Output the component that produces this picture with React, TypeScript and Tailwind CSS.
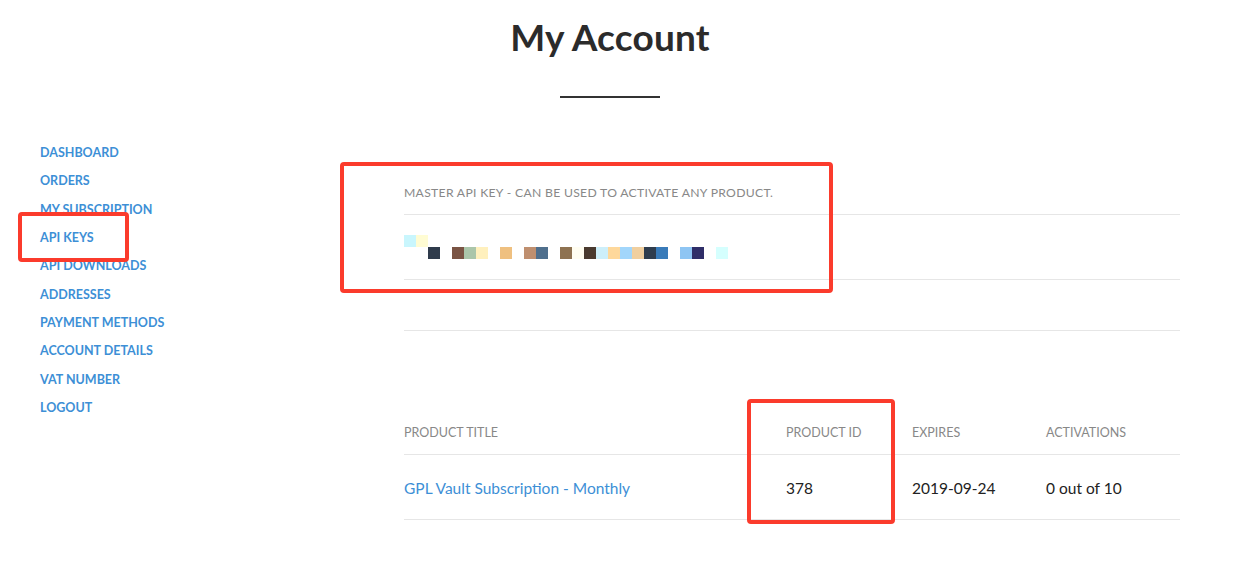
import React from "react";

const NAV = [
  "Dashboard",
  "Orders",
  "My Subscription",
  "API Keys",
  "API Downloads",
  "Addresses",
  "Payment Methods",
  "Account Details",
  "VAT Number",
  "Logout",
];

// pixelated (censored) key: [column index, row, colour]
const KEY_PIXELS: [number, number, string][] = [
  [0, 0, "#c9f6fd"], [1, 0, "#fffcd3"],
  [2, 1, "#2f3b4b"], [4, 1, "#7a5444"], [5, 1, "#abc6aa"], [6, 1, "#fff0bd"],
  [8, 1, "#efc080"], [10, 1, "#bf8f6f"], [11, 1, "#4f6f8d"], [13, 1, "#8e7251"],
  [14, 1, "#fffdf1"], [15, 1, "#4a3a2f"], [16, 1, "#cdeffa"], [17, 1, "#fed89b"],
  [18, 1, "#a2d6fb"], [19, 1, "#f0cf9f"], [20, 1, "#2f3d4e"], [21, 1, "#397bb9"],
  [23, 1, "#8ec5f3"], [24, 1, "#2f2e68"], [26, 1, "#d5fffe"],
];

const COLS = ["Product Title", "Product ID", "Expires", "Activations"];

function RedBox({ className }: { className: string }) {
  return <div className={`absolute border-[4.5px] border-[#fb3b2c] rounded-[4px] pointer-events-none ${className}`} />;
}

export default function App() {
  return (
    <div className="relative w-full min-h-[568px] bg-white text-[#222] font-['Lato','Open_Sans',sans-serif]">
      <div className="ml-[40px] w-[1140px]">
        {/* Page title */}
        <div className="pt-[15px] flex flex-col items-center">
          <h1 className="text-[37px] leading-[44px] font-bold text-[#2b2b2b] tracking-[0.2px]">My Account</h1>
          <div className="mt-[37px] w-[100px] h-[2px] bg-[#333]" />
        </div>

        <div className="flex mt-[41px]">
          {/* Account navigation */}
          <nav className="w-[364px] shrink-0">
            <ul>
              {NAV.map(n => (
                <li key={n} className="text-[12.5px] leading-[28.33px] font-bold uppercase text-[#3d8fd6]">
                  {n}
                </li>
              ))}
            </ul>
          </nav>

          {/* API keys content */}
          <div className="w-[776px] pt-[32px]">
            <div className="h-[44px] pt-[2px] flex items-center border-b border-[#e6e6e6] text-[12.2px] uppercase text-[#888] tracking-[0.3px]">
              Master API key - can be used to activate any product.
            </div>
            <div className="h-[65px] flex items-center border-b border-[#e6e6e6]">
              <svg width="336" height="24" viewBox="0 0 336 24" className="block">
                {KEY_PIXELS.map(([c, r, fill]) => (
                  <rect key={`${c}-${r}`} x={c * 12} y={r * 12} width="12" height="12" fill={fill} />
                ))}
              </svg>
            </div>
            <div className="h-[51px] border-b border-[#e6e6e6]" />

            <div className="mt-[79px]">
              <div className="grid grid-cols-[382px_126px_134px_134px] h-[45px] pt-[2px] items-center border-b border-[#e6e6e6]">
                {COLS.map(c => (
                  <div key={c} className="text-[12.5px] uppercase text-[#888]">{c}</div>
                ))}
              </div>
              <div className="grid grid-cols-[382px_126px_134px_134px] h-[65px] pt-[3px] items-center border-b border-[#e6e6e6] text-[15.5px]">
                <a href="#" className="text-[#3d8fd6]">GPL Vault Subscription - Monthly</a>
                <div>378</div>
                <div>2019-09-24</div>
                <div>0 out of 10</div>
              </div>
            </div>
          </div>
        </div>
      </div>

      {/* annotation boxes */}
      <RedBox className="left-[340px] top-[162px] w-[493px] h-[131px]" />
      <RedBox className="left-[18px] top-[212px] w-[111px] h-[50px]" />
      <RedBox className="left-[747px] top-[399px] w-[148px] h-[125px]" />
    </div>
  );
}
